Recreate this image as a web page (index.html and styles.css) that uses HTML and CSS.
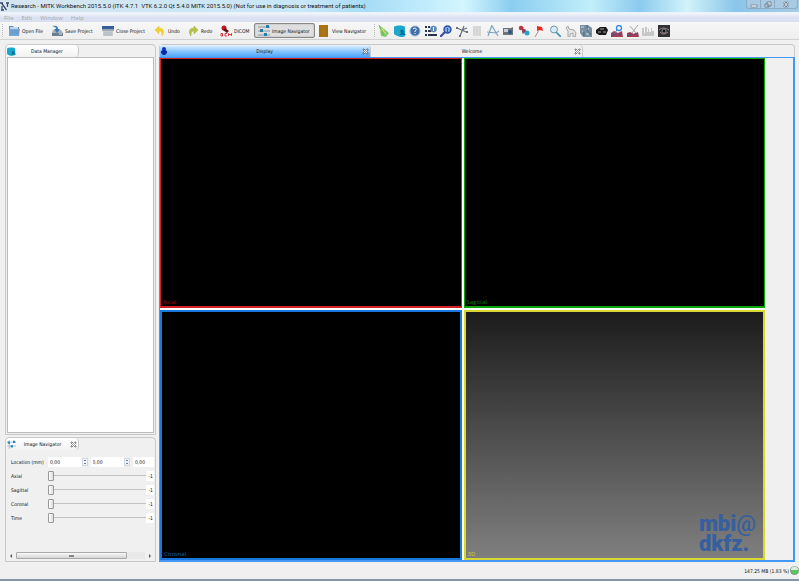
FILE: index.html
```html
<!DOCTYPE html>
<html lang="en">
<head>
<meta charset="utf-8">
<title>Research - MITK Workbench</title>
<link rel="stylesheet" href="styles.css">
</head>
<body>
<header class="titlebar">
  <svg class="app-icon" viewBox="0 0 9 9"><rect width="9" height="9" fill="#dfe8ef"/><path d="M0 1h3M6 1h3M1.500 1l5 7M7.500 1v4M2 4v4M1 8h3" stroke="#334b73" stroke-width="1.300" fill="none"/></svg>
  <h1>Research - MITK Workbench 2015.5.0 (ITK 4.7.1&nbsp; VTK 6.2.0 Qt 5.4.0 MITK 2015.5.0) (Not for use in diagnosis or treatment of patients)</h1>
  <div class="window-buttons">
    <button aria-label="Minimize"><svg viewBox="0 0 8 7"><rect x="1" y="4" width="6" height="2" fill="#fff" stroke="#65798d" stroke-width=".7"/></svg></button>
    <button aria-label="Restore"><svg viewBox="0 0 8 7"><path d="M3 1h4v4H3zM1 3h4v3H1z" fill="#e8f2fa" stroke="#65798d" stroke-width=".9"/></svg></button>
    <button class="close" aria-label="Close"><svg viewBox="0 0 8 7"><path d="M2 1l4 5M6 1L2 6" stroke="#65798d" stroke-width="2.400"/><path d="M2 1l4 5M6 1L2 6" stroke="#fff" stroke-width=".8"/></svg></button>
  </div>
</header>
<nav class="menubar"><button>File</button><button>Edit</button><button>Window</button><button>Help</button></nav>
<div class="toolbar">
  <div class="main-tools">
    <span class="grip"></span>
    <button class="tool open"><svg viewBox="0 0 12 12"><path d="M1 1h4l1 1h5v8H1z" fill="#5c87b5"/><path d="M2 2h8v3H2z" fill="#c4d8e8"/><path d="M1 4h11l-1 7H1z" fill="#76a5d5"/><path d="M2 6h9M2 8h9" stroke="#5c8cc2" stroke-width=".6"/></svg>Open File</button>
    <button class="tool save"><svg viewBox="0 0 12 12"><path d="M2 5h8l2 3v3H1V8z" fill="#a7b1b8"/><path d="M1 8h11v3H1z" fill="#6b7f91"/><path d="M1 1c4-1 6 0 6 3h2L6 8 3 4h2c0-2-1-2-4-3" fill="#3a79b7"/><path d="M8 9h3" stroke="#dae5ed"/></svg>Save Project</button>
    <button class="tool closep"><svg viewBox="0 0 12 12"><path d="M0 1h12v3H0z" fill="#345f9b"/><path d="M0 4h12v2H0z" fill="#9caab7"/><path d="M1 6h10v5H1z" fill="#c7cbd0"/><path d="M2 8h8M2 10h8" stroke="#9aa4ad" stroke-width=".5"/></svg>Close Project</button>
    <button class="tool undo"><svg viewBox="0 0 12 12"><path d="M1 5l4-4v2c5 0 6 4 3 8 0-4-1-5-3-5v3z" fill="#f1d22c" stroke="#dfc247" stroke-width=".5"/></svg>Undo</button>
    <button class="tool redo"><svg viewBox="0 0 12 12"><path d="M11 5L7 1v2C2 3 1 7 4 11c0-4 1-5 3-5v3z" fill="#b6c342" stroke="#a1ad4c" stroke-width=".5"/></svg>Redo</button>
    <button class="tool dicom"><svg viewBox="0 0 12 12"><circle cx="4" cy="3" r="2.500" fill="#c21820"/><path d="M5 3l4 3-2 2-4-3" fill="#5d1518"/><path d="M1 8.500h1.500v2.500H1zM7 8.500H5V11h2M8.500 11V8.500L10 10l1.500-1.500V11" fill="none" stroke="#d42733" stroke-width=".9"/></svg>DICOM</button>
    <button class="tool navigator active"><svg viewBox="0 0 12 12"><path d="M0 2h12M0 6h12M0 10h12" stroke="#87969f"/><path d="M8 0h3v3H8zM2 4h3v3H2zM6 8h3v3H6z" fill="#287da8"/></svg>Image Navigator</button>
    <button class="tool view"><svg viewBox="0 0 12 12"><path d="M1 0h9v12H1z" fill="#ad7214"/><path d="M2 1v10M9 1v10" stroke="#a06716" stroke-width=".7"/></svg>View Navigator</button>
  </div>
  <span class="grip"></span>
  <div class="view-tools">
    <button aria-label="Measurement"><svg viewBox="0 0 12 12"><path d="M1 0l10 8-3 4-5-1z" fill="#83ca68"/><path d="M3 3l5 6M2 6l5-3" stroke="#ebe77b"/><path d="M1 0l5 10" stroke="#55a466" stroke-width=".6"/></svg></button>
    <button aria-label="Data"><svg viewBox="0 0 12 12"><path d="M0 2c1-2 10-2 11 0v9c-2 2-7 1-11-2z" fill="#1ca8ca"/><path d="M6 6l2-2 2 2v2l2 2H5l2-2" fill="#09749b"/></svg></button>
    <button aria-label="Help"><svg viewBox="0 0 12 12"><circle cx="6" cy="6" r="5" fill="#416fa8" stroke="#9cb4ce"/><path d="M4 4c2-2 5 0 2 2v1M6 8v1" fill="none" stroke="#fff"/></svg></button>
    <button aria-label="Properties"><svg viewBox="0 0 12 12"><path d="M0 1h2v2H0zM0 5h2v2H0zM0 9h2v2H0zM3 9h9v2H3zM3 5h3v2H3zM3 1h2v2H3z" fill="#253449"/><circle cx="8.500" cy="4" r="3.300" fill="#5f89b8"/><path d="M8.500 2v4" stroke="#fff"/></svg></button>
    <button aria-label="Information"><svg viewBox="0 0 12 12"><circle cx="7.500" cy="4.500" r="3.500" fill="#86a8dc" stroke="#254faa" stroke-width="1.400"/><path d="M5 7l-5 5" stroke="#3c4b97" stroke-width="2"/><path d="M7.500 3v4" stroke="#315aab"/></svg></button>
    <button aria-label="Clipping"><svg viewBox="0 0 12 12"><path d="M1 3l9 4M8 1L4 11M6 5l5-2" stroke="#65717a" stroke-width="1.200"/><path d="M0 2h2v2H0zM10 6h2v2h-2zM3 10h2v2H3z" fill="#6b7175"/></svg></button>
    <button aria-label="Matrix"><svg viewBox="0 0 12 12"><path d="M2 1h8v10H2z" fill="#dedede"/><path d="M2 2h8M2 4h8M2 6h8M2 8h8M2 10h8" stroke="#bfc0c2" stroke-width=".6" stroke-dasharray="2 1"/></svg></button>
    <button aria-label="Compass"><svg viewBox="0 0 12 12"><path d="M5 0L1 11M5 1l6 10M0 7l9 1 3-2" fill="none" stroke="#7aa5c2" stroke-width="1.200"/></svg></button>
    <button aria-label="Screenshot"><svg viewBox="0 0 12 12"><path d="M1 3h8l2-1v8H1z" fill="#6c747c"/><path d="M2 4h4v3H2z" fill="#c7cdd1"/><circle cx="8" cy="7" r="2" fill="#2c5689"/></svg></button>
    <button aria-label="Points"><svg viewBox="0 0 12 12"><path d="M2 3l8 6M5 2v7" stroke="#5c6973"/><circle cx="3" cy="3" r="2.200" fill="#c52e3e"/><circle cx="6" cy="6" r="2" fill="#943a57"/><circle cx="9" cy="8" r="2.500" fill="#26a5ca"/></svg></button>
    <button aria-label="Pin"><svg viewBox="0 0 12 12"><path d="M4 1l5 1 1 4-3-1-3 1z" fill="#ee2820"/><path d="M6 5l-4 7" stroke="#bc8b84"/></svg></button>
    <button aria-label="Search"><svg viewBox="0 0 12 12"><circle cx="5" cy="4.500" r="3.500" fill="#d5edf6" stroke="#7895a5"/><path d="M7 7l5 5" stroke="#3d93ba" stroke-width="1.700"/></svg></button>
    <button aria-label="Animal"><svg viewBox="0 0 12 12"><path d="M1 3l2-2 1 3 5 1 2 3-1 4H8V8L5 9v3H3V6z" fill="#e6e6e6" stroke="#9b9fa1" stroke-width=".9"/></svg></button>
    <button aria-label="Volume"><svg viewBox="0 0 12 12"><path d="M0 0h8l4 3v9H3L0 8z" fill="#7890a2"/><path d="M1 2h3M6 4h3M2 6h3M6 9h3" stroke="#d1dadd"/><path d="M7 0v5l4 5M4 5v6" stroke="#46677f" fill="none"/></svg></button>
    <button aria-label="Movie"><svg viewBox="0 0 12 12"><path d="M0 5l4-3h6l2 3-2 5H3L0 8z" fill="#18191b"/><path d="M4 4h4M2 7h3M7 7h3" stroke="#a2a5a6"/></svg></button>
    <button aria-label="Segmentation"><svg viewBox="0 0 12 12"><path d="M0 8l3-2 4 2 4-2 1 6H0z" fill="#a73952"/><path d="M1 10h3M7 9h3" stroke="#365b84"/><circle cx="8" cy="3" r="2.500" fill="none" stroke="#3087df" stroke-width="1.300"/><path d="M6 5L3 9" stroke="#3087df"/></svg></button>
    <button aria-label="Segmentation utilities"><svg viewBox="0 0 12 12"><path d="M0 8l3-1 4 2 4-2 1 5H0z" fill="#a73952"/><path d="M1 10h3M7 9h3" stroke="#365b84"/><path d="M3 1l6 7M11 0L5 8" stroke="#a4a8aa"/></svg></button>
    <button aria-label="Statistics"><svg viewBox="0 0 12 12"><path d="M0 3h2v5h1V2h2v5h1V4h1v3h2V3h1v3h2v5H0z" fill="#c7c7c7"/></svg></button>
    <button aria-label="Volume visualization"><svg viewBox="0 0 12 12"><path d="M0 0h12v12H0z" fill="#303235"/><path d="M1 5c3-3 7-2 10 0M2 7c3 3 5 2 8 0" fill="none" stroke="#af8580"/><circle cx="6" cy="6" r="2" fill="#111" stroke="#778b92"/></svg></button>
  </div>
</div>
<main>
  <aside>
    <section class="panel manager">
      <div class="tabs"><button class="side-tab"><svg viewBox="0 0 12 12"><path d="M0 2c1-2 10-2 11 0v8c-2 3-9 2-11-1z" fill="#17a8ce"/><path d="M6 7l2-2 2 2v1l2 2H5l2-2" fill="#09749b"/></svg><span>Data Manager</span></button></div>
      <div class="tree"></div>
    </section>
    <section class="panel nav-panel">
      <div class="tabs"><button class="side-tab"><svg viewBox="0 0 12 12"><path d="M0 3h12M0 8h12M3 0v12" stroke="#8cb3d1"/><path d="M1 2h3v3H1zM8 1h3v3H8zM5 7h3v3H5z" fill="#3582b5"/></svg><span>Image Navigator</span><svg class="tab-x" viewBox="0 0 7 7"><path d="M1 1h1l1.500 1.500L5 1h1v1L4.500 3.500 6 5v1H5L3.500 4.500 2 6H1V5l1.500-1.500L1 2z" fill="#fff" stroke="#555" stroke-width=".7"/></svg></button></div>
      <form class="nav-form">
        <div class="location"><label for="x">Location (mm)</label><input id="x" value="0,00"><i class="spin"></i><input aria-label="Y" value="0,00"><i class="spin"></i><input aria-label="Z" value="0,00"></div>
        <div class="slider-row"><label for="axial">Axial</label><input id="axial" type="range" min="0" max="100" value="0"><output>-1</output></div>
        <div class="slider-row"><label for="sagittal">Sagittal</label><input id="sagittal" type="range" min="0" max="100" value="0"><output>-1</output></div>
        <div class="slider-row"><label for="coronal">Coronal</label><input id="coronal" type="range" min="0" max="100" value="0"><output>-1</output></div>
        <div class="slider-row"><label for="time">Time</label><input id="time" type="range" min="0" max="100" value="0"><output>-1</output></div>
      </form>
      <div class="scrollbar"><svg viewBox="0 0 4 4"><path d="M3 0v4L1 2z" fill="#555"/></svg><div class="track"><div class="thumb"></div></div><svg viewBox="0 0 4 4"><path d="M1 0v4l2-2z" fill="#555"/></svg></div>
    </section>
  </aside>
  <section class="editor">
    <div class="editor-tabs">
      <button class="editor-tab selected"><svg class="display-icon" viewBox="0 0 8 8"><circle cx="4" cy="2" r="2" fill="#1231be"/><path d="M1 4l2-1h2l2 1v2L5 8H3L1 6z" fill="#0c28a6"/></svg><span>Display</span><svg class="tab-x" viewBox="0 0 7 7"><path d="M1 1h1l1.500 1.500L5 1h1v1L4.500 3.500 6 5v1H5L3.500 4.500 2 6H1V5l1.500-1.500L1 2z" fill="#fff" stroke="#345" stroke-width=".7"/></svg></button>
      <button class="editor-tab"><span>Welcome</span><svg class="tab-x" viewBox="0 0 7 7"><path d="M1 1h1l1.500 1.500L5 1h1v1L4.500 3.500 6 5v1H5L3.500 4.500 2 6H1V5l1.500-1.500L1 2z" fill="#fff" stroke="#555" stroke-width=".7"/></svg></button>
    </div>
    <div class="display">
      <div class="views">
        <div class="view-pane axial">Axial</div><div class="view-pane sagittal">Sagittal</div>
        <div class="view-pane coronal">Coronal</div><div class="view-pane three">3D<div class="brand"><span>mbi<b>@</b></span><span>dkfz.</span></div></div>
      </div>
    </div>
  </section>
</main>
<footer><span>147.25 MB (1.83 %)</span><svg viewBox="0 0 9 9"><circle cx="4.500" cy="4.500" r="4" fill="#55c95a" stroke="#7b977b"/><path d="M1 4a3.500 3.500 0 0 1 7 0z" fill="#dcebdc"/></svg></footer>
</body>
</html>
```
FILE: styles.css
```css
* { box-sizing: border-box; }
body { margin: 0; height: 100vh; display: flex; flex-direction: column; background: #f0f0f0; color: #111; font: 5px/8px "DejaVu Sans Condensed", "DejaVu Sans", sans-serif; overflow: hidden; border-bottom: 2px solid #8497aa; }
button { border: 0; background: none; padding: 0; margin: 0; font: inherit; color: inherit; }
input { font: inherit; color: inherit; border: 0; margin: 0; padding: 0; min-width: 0; }
svg { display: block; flex-shrink: 0; }
.titlebar { flex: 0 0 12px; display: flex; align-items: center; background: linear-gradient(90deg, #d5e5f0 0%, #c8e7f7 38%, #a7dcf7 46%, #d3f6ff 58%, #8bcdf0 64%, #c2eefa 74%, #8bcaef 80%, #d1f3fa 86%, #8bc5e9 92%, #a8cce6 100%); border-bottom: 1px solid #e8f4f9; }
.app-icon { width: 9px; height: 9px; margin-right: 2px; }
h1 { font: 6px/10px Roboto, sans-serif; margin: 0; white-space: nowrap; color: #111; }
.window-buttons { display: flex; margin: 0 1px 3px auto; border: 1px solid #8cabc4; border-top: 0; border-radius: 0 0 3px 3px; background: #a9cae1; }
.window-buttons button { width: 14px; height: 8px; padding: 1px 3px; border-right: 1px solid #8cabc4; }
.window-buttons .close { width: 22px; padding: 1px 7px; border: 0; }
.window-buttons svg { width: 8px; height: 7px; }
.menubar { flex: 0 0 9px; display: flex; align-items: center; gap: 8px; padding-left: 4px; color: #a3a8b0; background: linear-gradient(#f2f5fb, #dce2f1 50%, #d9dfef); font: 6px/8px "Open Sans", sans-serif; }
.toolbar { flex: 0 0 18px; display: flex; align-items: center; border-bottom: 1px solid #d0d0d0; background: linear-gradient(#f7f7f7, #eeeeee); }
.main-tools { display: flex; align-items: center; flex: 0 0 374px; }
.grip { width: 2px; height: 13px; margin-left: 2px; border-left: 1px dotted #b7b7b7; flex-shrink: 0; }
.main-tools .grip { margin-right: 4px; }
.toolbar > .grip { margin-left: 0; }
.tool { display: flex; align-items: center; gap: 2px; height: 15px; white-space: nowrap; text-align: left; }
.tool svg { width: 12px; height: 12px; }
.open { width: 43px; }
.save { width: 51px; }
.closep { width: 52px; }
.undo, .redo { width: 33px; }
.dicom { width: 34px; }
.navigator { width: 61px; padding-left: 3px; border: 1px solid #888; border-radius: 2px; background: #dfdfdf; box-shadow: inset 0 0 2px #aaa; margin-right: 3px; }
.view-tools { flex: 0 0 292px; display: flex; justify-content: space-between; margin-left: 2px; }
.view-tools svg { width: 12px; height: 12px; }
main { flex: 1; min-height: 0; display: flex; gap: 3px; padding: 4px 4px 0 5px; }
aside { flex: 0 0 151px; min-width: 0; display: flex; flex-direction: column; gap: 2px; }
.panel { border: 1px solid #c8c8c8; border-radius: 4px 4px 0 0; background: #f0f0f0; display: flex; flex-direction: column; min-width: 0; }
.manager { flex: 1; }
.nav-panel { flex: 0 0 125px; }
.tabs { flex: 0 0 12px; display: flex; }
.side-tab { width: 73px; display: flex; align-items: center; border-right: 1px solid #c8c8c8; border-radius: 4px; background: linear-gradient(#fff, #f2f2f2); }
.side-tab svg { width: 9px; height: 9px; margin-left: 1px; }
.side-tab span { flex: 1; text-align: center; white-space: nowrap; }
.side-tab .tab-x, .tab-x { width: 7px; height: 7px; margin: 0 1px; }
.tree { flex: 1; margin: 0 1px 1px; background: #fff; border: 1px solid #bbb; }
.nav-form { padding: 6px 1px 0 5px; flex: 1; }
.location, .slider-row { display: flex; align-items: center; }
.location { height: 12px; margin-bottom: 1px; }
.slider-row { height: 14px; }
.location label { flex: 0 0 37px; white-space: nowrap; }
.location input { width: 32px; flex: 1 1 32px; height: 10px; padding-left: 2px; background: #fff; }
.location input:last-child { flex: 0 0 21px; }
.spin { width: 6px; height: 8px; margin-right: 3px; border: 1px solid #cfd9e2; background: radial-gradient(circle at 50% 25%, #6e8194 1px, transparent 1px), radial-gradient(circle at 50% 75%, #6e8194 1px, #eef3f7 1px); }
.slider-row label { flex: 0 0 37px; }
.slider-row input { appearance: none; width: 0; flex: 1; height: 12px; background: linear-gradient(transparent 5px, #c2c2c2 5px 6px, transparent 6px); }
.slider-row input::-webkit-slider-thumb { appearance: none; width: 6px; height: 10px; border: 1px solid #999; border-radius: 1px; background: linear-gradient(90deg, #fff, #ddd); }
.slider-row output { width: 8px; height: 10px; line-height: 10px; background: #fff; text-align: right; padding-right: 1px; }
.scrollbar { display: flex; align-items: center; gap: 3px; height: 9px; padding: 0 3px; margin-bottom: 1px; }
.scrollbar svg { width: 4px; height: 4px; }
.track { flex: 1; height: 7px; background: #e9e9e9; }
.thumb { width: 86%; height: 7px; border: 1px solid #aaa; border-radius: 1px; background: linear-gradient(90deg, transparent 48%, #888 48% 52%, transparent 52%) center / 100% 2px no-repeat, linear-gradient(#fafafa, #d4d4d4); }
.editor { flex: 1; min-width: 0; display: flex; flex-direction: column; }
.editor-tabs { flex: 0 0 13px; display: flex; border: 1px solid #c8c8c8; border-bottom: 0; border-radius: 4px 4px 0 0; }
.editor-tab { flex: 0 0 calc(100% / 3); display: flex; align-items: center; border-right: 1px solid #c8c8c8; border-radius: 0 4px 0 0; }
.editor-tab span { flex: 1; text-align: center; }
.display-icon { width: 8px; height: 8px; }
.selected { background: linear-gradient(#e9f5ff, #8dc7ff 50%, #4da3fb); }
.display { flex: 1; display: flex; padding-right: 28px; border: 1px solid #4398f2; border-width: 1px 2px 2px 1px; background: #f0f0f0; }
.views { flex: 1; display: grid; grid-template-columns: 1fr 1fr; grid-template-rows: 1fr 1fr; gap: 2px; background: #fff; }
.view-pane { position: relative; display: flex; align-items: flex-end; padding: 0 2px; background: #000; border: 1px solid; font: 6px/7px "Open Sans", sans-serif; }
.axial { color: #a00e0e; border-color: #d42125; }
.sagittal { color: #087b08; border-color: #07a807; }
.view-pane.axial, .view-pane.sagittal { border-bottom-width: 2px; }
.coronal { color: #0a66b4; border: 2px solid #1878dd; }
.three { color: #d3d31c; border: 2px solid #d8d832; background: linear-gradient(#1c1c1c, #7f7f7f); }
.brand { position: absolute; right: 7px; bottom: 4px; display: flex; flex-direction: column; color: #355f9f; font: 900 22px/20px Roboto, sans-serif; }
.brand b { font-weight: 500; }
footer { flex: 0 0 17px; display: flex; align-items: center; justify-content: flex-end; gap: 1px; }
footer svg { width: 9px; height: 9px; }
```
